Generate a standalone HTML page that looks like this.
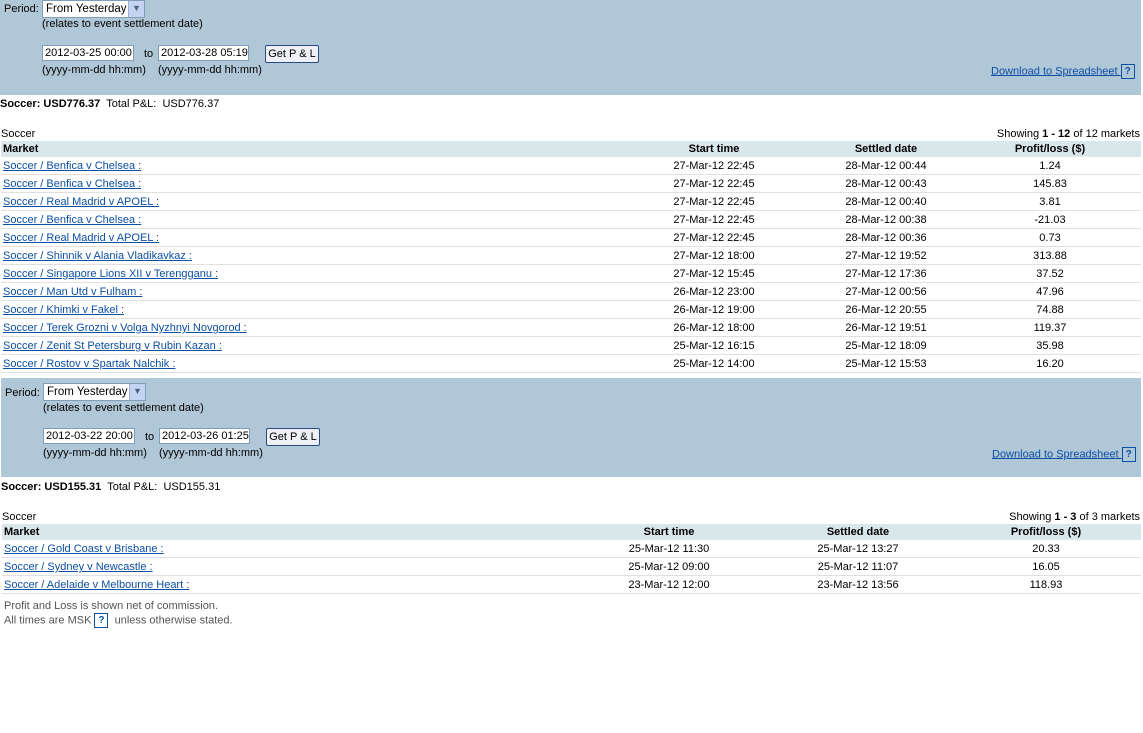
<!DOCTYPE html>
<html><head><meta charset="utf-8"><style>
body{margin:0;background:#fff;font-family:"Liberation Sans",Arial,sans-serif;font-size:11px;color:#000;width:1143px;height:733px;overflow:hidden;position:relative}
.a{position:absolute;white-space:nowrap;margin-top:1px}
.row .a{margin-top:1px}
.panel{position:absolute;background:#b0c7d7}
.inp{position:absolute;background:#fff;border:1px solid #7f9db9;height:16px;line-height:15px;padding-left:2px;box-sizing:border-box;white-space:nowrap;overflow:hidden;font-size:11px}
.sel{position:absolute;background:#fff;border:1px solid #7f9db9;height:18px;line-height:16px;padding-left:3px;box-sizing:border-box;white-space:nowrap;overflow:hidden;font-size:11.5px}
.arr{position:absolute;right:0;top:0;width:16px;height:16px;background:#c3d3f0;border-left:1px solid #9bb0d8;box-sizing:border-box;text-align:center;font-size:9px;line-height:15px;color:#4d6185}
.btn{position:absolute;background:#eef0f5;border:1px solid #2a4a86;border-radius:2px;height:18px;line-height:16px;text-align:center;box-sizing:border-box;white-space:nowrap}
a{color:#0d4fa3;text-decoration:underline}
.q{display:inline-block;border:1px solid #0d4fa3;color:#0d4fa3;width:12px;height:13px;line-height:13px;text-align:center;font-weight:bold;font-size:10px;vertical-align:middle}
.hdr{position:absolute;background:#d9e6ea;height:16px;font-weight:bold;line-height:17px}
.row{position:absolute;height:18px;border-bottom:1px solid #e0e0e0;box-sizing:border-box}
.c{position:absolute;text-align:center;width:160px;top:3px}
.hdr .c{top:0}
</style></head><body>

<div class="panel" style="left:0;top:0;width:1141px;height:95px"></div>
<div class="a" style="left:4px;top:2px">Period:</div>
<div class="sel" style="left:42px;top:0;width:103px">From Yesterday<div class="arr">&#9660;</div></div>
<div class="a" style="left:42px;top:17px">(relates to event settlement date)</div>
<div class="inp" style="left:42px;top:45px;width:92px">2012-03-25 00:00</div>
<div class="a" style="left:144px;top:47px">to</div>
<div class="inp" style="left:158px;top:45px;width:91px">2012-03-28 05:19</div>
<div class="btn" style="left:265px;top:45px;width:54px">Get P &amp; L</div>
<div class="a" style="left:42px;top:63px">(yyyy-mm-dd hh:mm)</div>
<div class="a" style="left:158px;top:63px">(yyyy-mm-dd hh:mm)</div>
<div class="a" style="left:991px;top:63px"><a>Download to Spreadsheet </a> <span class="q">?</span></div>

<div class="a" style="left:0;top:97px"><b>Soccer: USD776.37</b>&nbsp; Total P&amp;L:&nbsp; USD776.37</div>
<div class="a" style="left:1px;top:127px">Soccer</div>
<div class="a" style="right:3px;top:127px">Showing <b>1 - 12</b> of 12 markets</div>
<div class="hdr" style="left:1px;top:141px;width:1140px"><span style="margin-left:2px">Market</span>
<div class="c" style="left:633px">Start time</div><div class="c" style="left:805px">Settled date</div><div class="c" style="left:969px">Profit/loss ($)</div></div>

<div class="row" style="left:1px;top:157px;width:1140px"><a class="a" style="left:2px;top:2px">Soccer / Benfica v Chelsea : </a><div class="c" style="left:633px">27-Mar-12 22:45</div><div class="c" style="left:805px">28-Mar-12 00:44</div><div class="c" style="left:969px">1.24</div></div>
<div class="row" style="left:1px;top:175px;width:1140px"><a class="a" style="left:2px;top:2px">Soccer / Benfica v Chelsea : </a><div class="c" style="left:633px">27-Mar-12 22:45</div><div class="c" style="left:805px">28-Mar-12 00:43</div><div class="c" style="left:969px">145.83</div></div>
<div class="row" style="left:1px;top:193px;width:1140px"><a class="a" style="left:2px;top:2px">Soccer / Real Madrid v APOEL : </a><div class="c" style="left:633px">27-Mar-12 22:45</div><div class="c" style="left:805px">28-Mar-12 00:40</div><div class="c" style="left:969px">3.81</div></div>
<div class="row" style="left:1px;top:211px;width:1140px"><a class="a" style="left:2px;top:2px">Soccer / Benfica v Chelsea : </a><div class="c" style="left:633px">27-Mar-12 22:45</div><div class="c" style="left:805px">28-Mar-12 00:38</div><div class="c" style="left:969px">-21.03</div></div>
<div class="row" style="left:1px;top:229px;width:1140px"><a class="a" style="left:2px;top:2px">Soccer / Real Madrid v APOEL : </a><div class="c" style="left:633px">27-Mar-12 22:45</div><div class="c" style="left:805px">28-Mar-12 00:36</div><div class="c" style="left:969px">0.73</div></div>
<div class="row" style="left:1px;top:247px;width:1140px"><a class="a" style="left:2px;top:2px">Soccer / Shinnik v Alania Vladikavkaz : </a><div class="c" style="left:633px">27-Mar-12 18:00</div><div class="c" style="left:805px">27-Mar-12 19:52</div><div class="c" style="left:969px">313.88</div></div>
<div class="row" style="left:1px;top:265px;width:1140px"><a class="a" style="left:2px;top:2px">Soccer / Singapore Lions XII v Terengganu : </a><div class="c" style="left:633px">27-Mar-12 15:45</div><div class="c" style="left:805px">27-Mar-12 17:36</div><div class="c" style="left:969px">37.52</div></div>
<div class="row" style="left:1px;top:283px;width:1140px"><a class="a" style="left:2px;top:2px">Soccer / Man Utd v Fulham : </a><div class="c" style="left:633px">26-Mar-12 23:00</div><div class="c" style="left:805px">27-Mar-12 00:56</div><div class="c" style="left:969px">47.96</div></div>
<div class="row" style="left:1px;top:301px;width:1140px"><a class="a" style="left:2px;top:2px">Soccer / Khimki v Fakel : </a><div class="c" style="left:633px">26-Mar-12 19:00</div><div class="c" style="left:805px">26-Mar-12 20:55</div><div class="c" style="left:969px">74.88</div></div>
<div class="row" style="left:1px;top:319px;width:1140px"><a class="a" style="left:2px;top:2px">Soccer / Terek Grozni v Volga Nyzhnyi Novgorod : </a><div class="c" style="left:633px">26-Mar-12 18:00</div><div class="c" style="left:805px">26-Mar-12 19:51</div><div class="c" style="left:969px">119.37</div></div>
<div class="row" style="left:1px;top:337px;width:1140px"><a class="a" style="left:2px;top:2px">Soccer / Zenit St Petersburg v Rubin Kazan : </a><div class="c" style="left:633px">25-Mar-12 16:15</div><div class="c" style="left:805px">25-Mar-12 18:09</div><div class="c" style="left:969px">35.98</div></div>
<div class="row" style="left:1px;top:355px;width:1140px"><a class="a" style="left:2px;top:2px">Soccer / Rostov v Spartak Nalchik : </a><div class="c" style="left:633px">25-Mar-12 14:00</div><div class="c" style="left:805px">25-Mar-12 15:53</div><div class="c" style="left:969px">16.20</div></div>

<div class="panel" style="left:1px;top:378px;width:1140px;height:99px"></div>
<div class="a" style="left:5px;top:386px">Period:</div>
<div class="sel" style="left:43px;top:383px;width:103px">From Yesterday<div class="arr">&#9660;</div></div>
<div class="a" style="left:43px;top:401px">(relates to event settlement date)</div>
<div class="inp" style="left:43px;top:428px;width:92px">2012-03-22 20:00</div>
<div class="a" style="left:145px;top:430px">to</div>
<div class="inp" style="left:159px;top:428px;width:91px">2012-03-26 01:25</div>
<div class="btn" style="left:266px;top:428px;width:54px">Get P &amp; L</div>
<div class="a" style="left:43px;top:446px">(yyyy-mm-dd hh:mm)</div>
<div class="a" style="left:159px;top:446px">(yyyy-mm-dd hh:mm)</div>
<div class="a" style="left:992px;top:446px"><a>Download to Spreadsheet </a> <span class="q">?</span></div>

<div class="a" style="left:1px;top:480px"><b>Soccer: USD155.31</b>&nbsp; Total P&amp;L:&nbsp; USD155.31</div>
<div class="a" style="left:2px;top:510px">Soccer</div>
<div class="a" style="right:3px;top:510px">Showing <b>1 - 3</b> of 3 markets</div>
<div class="hdr" style="left:2px;top:524px;width:1139px"><span style="margin-left:2px">Market</span>
<div class="c" style="left:587px">Start time</div><div class="c" style="left:776px">Settled date</div><div class="c" style="left:964px">Profit/loss ($)</div></div>
<div class="row" style="left:2px;top:540px;width:1139px"><a class="a" style="left:2px;top:2px">Soccer / Gold Coast v Brisbane : </a><div class="c" style="left:587px">25-Mar-12 11:30</div><div class="c" style="left:776px">25-Mar-12 13:27</div><div class="c" style="left:964px">20.33</div></div>
<div class="row" style="left:2px;top:558px;width:1139px"><a class="a" style="left:2px;top:2px">Soccer / Sydney v Newcastle : </a><div class="c" style="left:587px">25-Mar-12 09:00</div><div class="c" style="left:776px">25-Mar-12 11:07</div><div class="c" style="left:964px">16.05</div></div>
<div class="row" style="left:2px;top:576px;width:1139px"><a class="a" style="left:2px;top:2px">Soccer / Adelaide v Melbourne Heart : </a><div class="c" style="left:587px">23-Mar-12 12:00</div><div class="c" style="left:776px">23-Mar-12 13:56</div><div class="c" style="left:964px">118.93</div></div>

<div class="a" style="left:4px;top:599px;color:#555">Profit and Loss is shown net of commission.</div>
<div class="a" style="left:4px;top:612px;color:#555">All times are MSK <span class="q">?</span>&nbsp; unless otherwise stated.</div>
</body></html>
